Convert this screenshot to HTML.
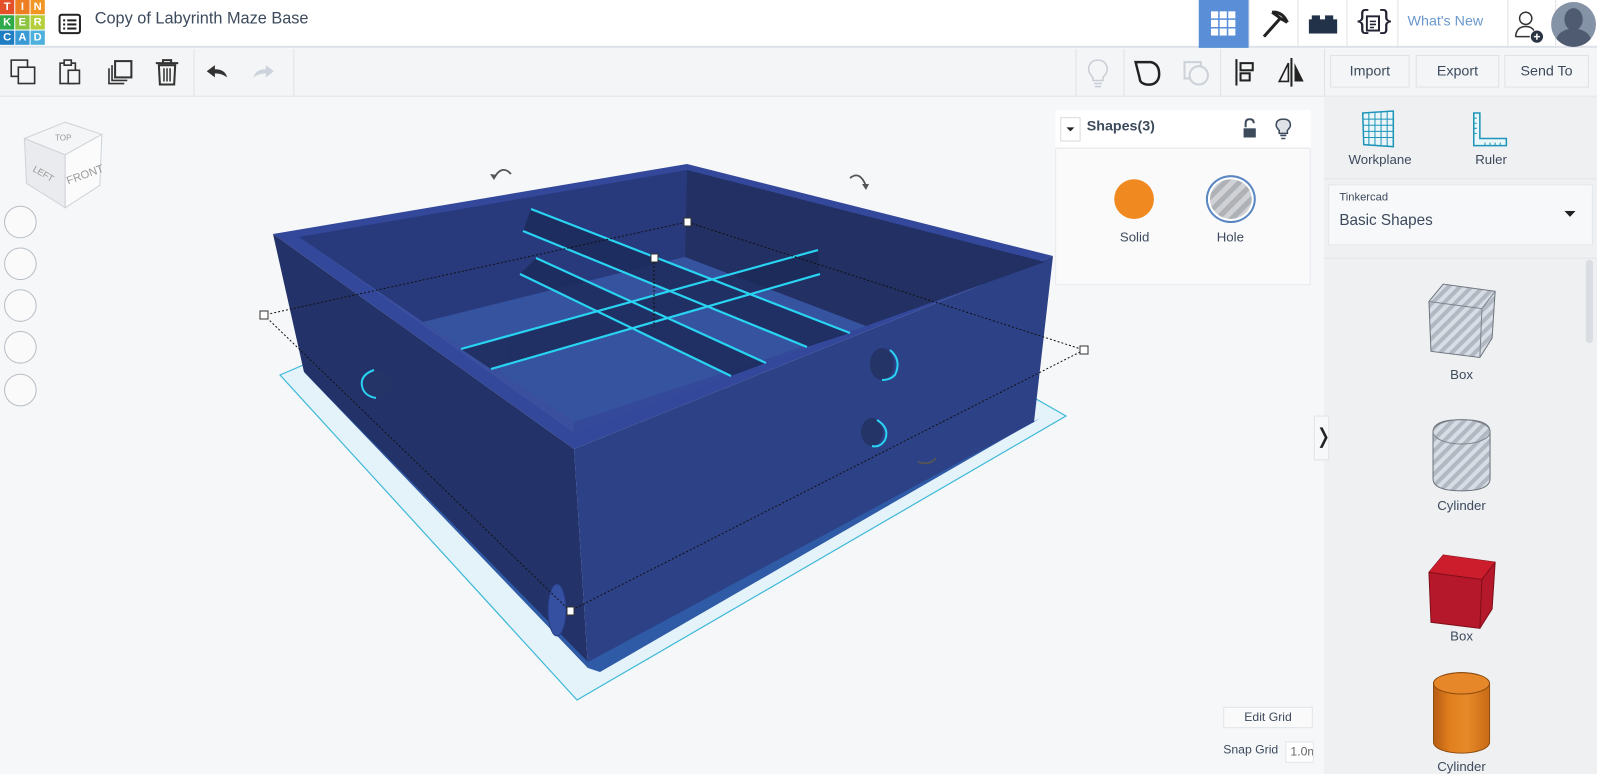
<!DOCTYPE html>
<html><head><meta charset="utf-8">
<style>
*{box-sizing:border-box;margin:0;padding:0}
html,body{width:1597px;height:774px;overflow:hidden;background:#f6f7f8;font-family:"Liberation Sans",sans-serif;color:#3c4a5c}
#w{position:absolute;left:0;top:0;width:1568px;height:760px;transform:scale(1.01849,1.01842);transform-origin:0 0;background:#f6f7f8}
.a{position:absolute}
.hdr{left:0;top:0;width:1568px;height:47px;background:#fff;border-bottom:2px solid #dde2ea}
.tb{left:0;top:48px;width:1568px;height:47px;background:#f4f5f6;border-bottom:1px solid #e2e5e8}
.vs{position:absolute;top:48px;width:1px;height:46px;background:#dfe2e6}
.btn{position:absolute;top:54px;height:32px;border:1px solid #dfe2e6;background:#f4f5f6;font-size:14px;color:#3c4a5c;text-align:center;line-height:28px}
.rp{left:1300px;top:95px;width:268px;height:665px;background:#eff0f2}
.lbl{position:absolute;font-size:13px;color:#3c4a5c;text-align:center}
.circ{position:absolute;left:4px;width:32px;height:32px;border:1px solid #b8bec6;border-radius:50%;background:#fafafa}
.logo div{position:absolute;width:14px;height:14px;color:#fff;font-size:11px;font-weight:bold;text-align:center;line-height:14px}
</style></head><body>
<div id="w">
<div class="a hdr"></div>
<div class="a tb"></div>
<div class="a logo" style="left:0;top:0;width:44px;height:44px">
<div style="left:0;top:0;background:#e4502a">T</div><div style="left:15px;top:0;background:#ee7e22">I</div><div style="left:30px;top:0;background:#f29523">N</div>
<div style="left:0;top:15px;background:#2eaa4a">K</div><div style="left:15px;top:15px;background:#8cc43f">E</div><div style="left:30px;top:15px;background:#b5cf3a">R</div>
<div style="left:0;top:30px;background:#1f7dc4">C</div><div style="left:15px;top:30px;background:#3a9ad6">A</div><div style="left:30px;top:30px;background:#4db0dd">D</div>
</div>
<svg class="a" style="left:57px;top:13px" width="24" height="22" viewBox="0 0 24 22"><rect x="1.5" y="1.5" width="20" height="18" rx="2" fill="none" stroke="#222" stroke-width="2"/><g fill="#222"><rect x="5" y="6" width="2" height="2"/><rect x="9" y="6" width="9" height="2"/><rect x="5" y="10" width="2" height="2"/><rect x="9" y="10" width="9" height="2"/><rect x="5" y="14" width="2" height="2"/><rect x="9" y="14" width="9" height="2"/></g></svg>
<div class="a" style="left:93px;top:10px;font-size:16px;color:#3c4a5c">Copy of Labyrinth Maze Base</div>
<div class="a" style="left:1177px;top:0;width:49px;height:47px;background:#5a8fd8"></div>
<svg class="a" style="left:1189px;top:11px" width="24" height="24"><g fill="#fff"><rect x="0" y="0" width="7" height="7"/><rect x="8.5" y="0" width="7" height="7"/><rect x="17" y="0" width="7" height="7"/><rect x="0" y="8.5" width="7" height="7"/><rect x="8.5" y="8.5" width="7" height="7"/><rect x="17" y="8.5" width="7" height="7"/><rect x="0" y="17" width="7" height="7"/><rect x="8.5" y="17" width="7" height="7"/><rect x="17" y="17" width="7" height="7"/></g></svg>
<div class="vs" style="top:0;left:1226px;height:47px"></div><div class="vs" style="top:0;left:1274px;height:47px"></div><div class="vs" style="top:0;left:1322px;height:47px"></div><div class="vs" style="top:0;left:1372px;height:47px"></div><div class="vs" style="top:0;left:1480px;height:47px"></div><div class="vs" style="top:0;left:1527px;height:47px"></div>
<svg class="a" style="left:1235px;top:8px" width="32" height="30"><path d="M6 28 L22 10 M14 4 Q24 3 29 14 M14 4 Q20 8 22 10 M22 10 Q26 12 29 14" stroke="#222" stroke-width="3" fill="none"/></svg>
<svg class="a" style="left:1285px;top:15px" width="28" height="18"><rect x="0" y="4" width="28" height="14" fill="#223249"/><rect x="3" y="0" width="8" height="5" fill="#223249"/><rect x="16" y="0" width="8" height="5" fill="#223249"/></svg>
<div class="a" style="left:1330px;top:6px;font-size:26px;color:#223;font-family:'Liberation Mono',monospace">{</div><div class="a" style="left:1353px;top:6px;font-size:26px;color:#223;font-family:'Liberation Mono',monospace">}</div>
<svg class="a" style="left:1341px;top:15px" width="14" height="16"><rect x="1" y="1" width="12" height="14" fill="none" stroke="#223" stroke-width="2"/><path d="M4 6h6M4 9h6M4 12h4" stroke="#223" stroke-width="1.5"/></svg>
<div class="a" style="left:1382px;top:12px;font-size:14px;color:#6a98cc">What's New</div>
<svg class="a" style="left:1486px;top:9px" width="32" height="34"><circle cx="12" cy="9" r="6" fill="none" stroke="#333" stroke-width="1.5"/><path d="M2 27 Q3 17 12 17 Q18 17 20 21 M2 27 H16" fill="none" stroke="#333" stroke-width="1.5"/><circle cx="23" cy="27" r="6" fill="#2a3344"/><path d="M23 24v6M20 27h6" stroke="#fff" stroke-width="1.5"/></svg>
<div class="a" style="left:1523px;top:2px;width:44px;height:44px;border-radius:50%;background:#8593a6;overflow:hidden"><div class="a" style="left:13px;top:6px;width:18px;height:22px;border-radius:50%;background:#4e5b70"></div><div class="a" style="left:5px;top:26px;width:34px;height:24px;border-radius:50% 50% 0 0;background:#4e5b70"></div></div>
<svg class="a" style="left:10px;top:58px" width="26" height="26"><rect x="1" y="1" width="16" height="16" fill="none" stroke="#333" stroke-width="1.6"/><rect x="8" y="8" width="16" height="16" fill="#f4f5f6" stroke="#333" stroke-width="1.6"/></svg>
<svg class="a" style="left:57px;top:57px" width="24" height="28"><rect x="2" y="5" width="15" height="20" fill="none" stroke="#333" stroke-width="1.6"/><rect x="6" y="2" width="7" height="5" fill="#f4f5f6" stroke="#333" stroke-width="1.6"/><rect x="10" y="12" width="11" height="13" fill="#f4f5f6" stroke="#333" stroke-width="1.6"/></svg>
<svg class="a" style="left:104px;top:58px" width="28" height="28"><rect x="9" y="2" width="16" height="16" fill="none" stroke="#333" stroke-width="2"/><path d="M6 6v15h15M3 9v15h15" fill="none" stroke="#333" stroke-width="1.6"/></svg>
<svg class="a" style="left:152px;top:57px" width="24" height="28"><path d="M1 5h22M8 5V2h8v3" fill="none" stroke="#333" stroke-width="2"/><path d="M4 7h16l-1 19H5z" fill="none" stroke="#333" stroke-width="2"/><path d="M9 10v13M12 10v13M15 10v13" stroke="#333" stroke-width="1.5"/></svg>
<div class="vs" style="left:190px"></div><div class="vs" style="left:288px"></div>
<svg class="a" style="left:201px;top:62px" width="24" height="18"><path d="M2 8 L10 2 V6 Q20 6 22 14 Q17 10 10 10 V14 Z" fill="#333"/></svg>
<svg class="a" style="left:247px;top:62px" width="24" height="18"><path d="M22 8 L14 2 V6 Q4 6 2 14 Q7 10 14 10 V14 Z" fill="#ccd3dc"/></svg>
<div class="vs" style="left:1056px"></div><div class="vs" style="left:1103px"></div><div class="vs" style="left:1198px"></div><div class="vs" style="left:1300px"></div>
<svg class="a" style="left:1068px;top:58px" width="20" height="28"><path d="M5 18 Q0 13 1 8 Q3 1 10 1 Q17 1 19 8 Q20 13 15 18 V21 H5Z" fill="none" stroke="#c9ced6" stroke-width="1.5"/><path d="M6 24h8M7 27h6" stroke="#c9ced6" stroke-width="1.5"/></svg>
<svg class="a" style="left:1113px;top:59px" width="28" height="26"><path d="M2 2 H17 Q26 4 25 16 Q23 25 13 24 Q6 23 6 18 L2 2Z" fill="none" stroke="#222" stroke-width="2.4"/></svg>
<svg class="a" style="left:1161px;top:59px" width="28" height="26"><rect x="2" y="2" width="16" height="16" fill="none" stroke="#cdd2d9" stroke-width="2"/><circle cx="16" cy="15" r="9" fill="#f4f5f6" stroke="#cdd2d9" stroke-width="2"/></svg>
<svg class="a" style="left:1212px;top:57px" width="22" height="28"><path d="M2 1v26" stroke="#222" stroke-width="2"/><rect x="6" y="5" width="12" height="7" fill="none" stroke="#222" stroke-width="2"/><rect x="6" y="15" width="9" height="7" fill="none" stroke="#222" stroke-width="2"/></svg>
<svg class="a" style="left:1253px;top:56px" width="30" height="30"><path d="M15 1v28" stroke="#222" stroke-width="2"/><path d="M12 6 L3 24 H12Z" fill="none" stroke="#222" stroke-width="1.6"/><path d="M18 6 L27 24 H18Z" fill="#222"/></svg>
<div class="btn" style="left:1306px;width:78px">Import</div>
<div class="btn" style="left:1390px;width:82px">Export</div>
<div class="btn" style="left:1477px;width:83px">Send To</div>
<div class="a rp"></div>
<svg class="a" style="left:1335px;top:108px" width="36" height="38"><path d="M3 3 L33 1 L33 36 L4 34Z" fill="#eaf6fa" stroke="#1e94b8" stroke-width="1.5"/><g stroke="#1e94b8" stroke-width="1"><path d="M9 3v32M15 2.5v32.5M21 2v33M27 1.5v34M3.5 9h29.5M3.7 15h29.3M3.8 21h29.2M3.9 27h29.1"/></g></svg>
<div class="lbl" style="left:1315px;top:149px;width:80px">Workplane</div>
<svg class="a" style="left:1445px;top:110px" width="36" height="36"><path d="M2 1 H8 V26 H34 V33 H2Z" fill="#eaf6fa" stroke="#1e94b8" stroke-width="1.5"/><path d="M2 6h3M2 11h3M2 16h3M2 21h3M13 33v-3M18 33v-3M23 33v-3M28 33v-3" stroke="#1e94b8" stroke-width="1"/></svg>
<div class="lbl" style="left:1424px;top:149px;width:80px">Ruler</div>
<div class="a" style="left:1300px;top:175px;width:268px;height:1px;background:#e2e5e8"></div>
<div class="a" style="left:1304px;top:181px;width:260px;height:60px;background:#f7f8f9;border:1px solid #e3e6e9"></div>
<div class="a" style="left:1315px;top:188px;font-size:11px">Tinkercad</div>
<div class="a" style="left:1315px;top:208px;font-size:15px">Basic Shapes</div>
<svg class="a" style="left:1536px;top:207px" width="12" height="8"><path d="M0 0h11l-5.5 6z" fill="#222"/></svg>
<div class="a" style="left:1300px;top:253px;width:268px;height:1px;background:#e2e5e8"></div>
<div class="a" style="left:1557px;top:255px;width:7px;height:82px;border-radius:4px;background:#dadde1"></div>
<svg class="a" style="left:1395px;top:272px" width="80" height="360">
<defs><pattern id="st" width="8" height="8" patternUnits="userSpaceOnUse" patternTransform="rotate(45)"><rect width="8" height="8" fill="#d7dde5"/><rect width="4" height="8" fill="#b1b8c2"/></pattern></defs>
<path d="M8 24 L22 7 L73 14 L70 60 L58 79 L10 73Z" fill="url(#st)" stroke="#6e747c" stroke-width="1"/><path d="M8 24 L60 31 L73 14 M60 31 L58 79" fill="none" stroke="#7d838b" stroke-width="1"/>
<path d="M12 152 Q12 140 40 140 Q68 140 68 152 V198 Q68 210 40 210 Q12 210 12 198Z" fill="url(#st)" stroke="#6e747c"/><ellipse cx="40" cy="152" rx="28" ry="12" fill="none" stroke="#7d838b"/>
<path d="M8 290 L22 273 L73 280 L70 326 L58 345 L10 339Z" fill="#b5182a" stroke="#7e0e18"/><path d="M8 290 L22 273 L73 280 L60 297Z" fill="#cc1d2d"/><path d="M8 290 L60 297 L73 280 M60 297 L58 345" fill="none" stroke="#7e0e18"/>
</svg>
<div class="a" style="left:1407px;top:660px;width:56px;height:80px;background:linear-gradient(90deg,#b85d12,#e2801f 30%,#e78a28 60%,#c96a16);border:1px solid #8a4a0e;border-radius:28px/11px"></div>
<div class="a" style="left:1407px;top:660px;width:56px;height:22px;border-radius:50%;background:#e6872a;border:1px solid #8a4a0e"></div>
<div class="lbl" style="left:1395px;top:360px;width:80px">Box</div>
<div class="lbl" style="left:1395px;top:489px;width:80px">Cylinder</div>
<div class="lbl" style="left:1395px;top:617px;width:80px">Box</div>
<div class="lbl" style="left:1395px;top:745px;width:80px">Cylinder</div>
<svg class="a" style="left:0;top:0" width="1568" height="760" viewBox="0 0 1597 774">
<path d="M280 375 L687 200 L1066 416 L577 700Z" fill="#e3f3f9" stroke="#3db8d8" stroke-width="1.2"/>
<path d="M273 234 L687 164 L1053 256 L574 449Z" fill="#33489a"/>
<path d="M273 234 L574 449 L588 668 L304 372Z" fill="#24326a"/>
<path d="M574 449 L1053 256 L1034 422 L588 668Z" fill="#2d4187"/>
<path d="M304 372 L588 668 L600 672 L1040 418 L1034 422 L588 662Z" fill="#2e5aa6"/>
<path d="M299 237 L687 170 L1045 262 L574 433Z" fill="#34499a"/>
<path d="M299 237 L687 170 L685 257 L423 322Z" fill="#283a7c"/>
<path d="M687 170 L1045 262 L866 326 L685 257Z" fill="#223063"/>
<path d="M685 257 L866 326 L574 422 L423 322Z" fill="#36539f"/>
<path d="M299 237 L423 322 L574 422 L574 433Z" fill="#3a4f9e"/>
<g fill="#1d2b5a" opacity=".85"><path d="M531 209 L850 333 L807 347 L523 231Z"/><path d="M536 258 L766 363 L731 376 L520 274Z"/><path d="M818 250 L461 349 L491 369 L820 274Z"/></g>
<g stroke="#29d3f2" stroke-width="2.2"><path d="M531 209 L850 333M523 231 L807 347M536 258 L766 363M520 274 L731 376M818 250 L461 349M820 274 L491 369"/></g>
<g fill="#243466"><ellipse cx="378" cy="384" rx="14" ry="14"/><ellipse cx="882" cy="364" rx="12" ry="16"/><ellipse cx="872" cy="432" rx="11" ry="14"/></g>
<g fill="none" stroke="#29d3f2" stroke-width="2"><path d="M374 370 Q360 375 362 386 Q364 396 376 398"/><path d="M890 350 Q902 360 895 375 Q890 380 882 380"/><path d="M877 420 Q890 428 885 440 Q880 448 872 446"/></g>
<ellipse cx="557" cy="610" rx="9" ry="26" fill="#3550a0" stroke="#263a80"/>
<g fill="none" stroke="#111" stroke-width="1" stroke-dasharray="2,2"><path d="M264 315 L570 611 L1084 350 L687 222 L509 261 L264 315"/><path d="M654 258 V327"/></g>
<g fill="#fff" stroke="#333"><rect x="260" y="311" width="8" height="8"/><rect x="1080" y="346" width="8" height="8"/><rect x="567" y="607" width="7" height="8"/><rect x="684" y="218" width="7" height="8"/><rect x="651" y="254" width="7" height="8"/></g>
<g fill="none" stroke="#555" stroke-width="1.8"><path d="M494 178 Q502 164 511 174"/><path d="M850 178 Q860 170 866 186"/><path d="M918 462 Q930 466 936 458"/></g>
<g fill="#555"><path d="M490 174 l4 6 l3 -5z"/><path d="M862 184 l4 6 l3 -6z"/></g>
</svg>
<svg class="a" style="left:20px;top:118px" width="84" height="90"><path d="M4 18 L44 2 L80 14 L44 34Z" fill="#f4f5f6" stroke="#cfd3d8"/><path d="M4 18 L44 34 L44 86 L6 62Z" fill="#e9ebee" stroke="#cfd3d8"/><path d="M44 34 L80 14 L78 64 L44 86Z" fill="#fbfbfc" stroke="#cfd3d8"/><text x="34" y="20" font-size="8" fill="#999" font-family="Liberation Sans">TOP</text><text x="12" y="52" font-size="9" fill="#999" font-family="Liberation Sans" transform="rotate(30 16 50)">LEFT</text><text x="46" y="62" font-size="11" fill="#999" font-family="Liberation Sans" transform="rotate(-20 50 60)">FRONT</text></svg>
<div class="circ" style="top:202px"></div><div class="circ" style="top:243px"></div><div class="circ" style="top:284px"></div><div class="circ" style="top:325px"></div><div class="circ" style="top:367px"></div>
<div class="a" style="left:1036px;top:108px;width:251px;height:172px;background:#fafafb;border:1px solid #e7e9ec"></div>
<div class="a" style="left:1036px;top:108px;width:251px;height:38px;background:#fff;border-bottom:1px solid #e3e6e9"></div>
<div class="a" style="left:1041px;top:115px;width:20px;height:24px;border:1px solid #d8dbe0;background:#fff"></div>
<svg class="a" style="left:1047px;top:125px" width="9" height="6"><path d="M0 0h8l-4 4z" fill="#222"/></svg>
<div class="a" style="left:1067px;top:115px;font-size:14px;font-weight:bold;color:#3c4a5c">Shapes(3)</div>
<svg class="a" style="left:1219px;top:116px" width="16" height="20"><path d="M4 9 V5 Q4 1 8 1 Q12 1 12 5" fill="none" stroke="#3c4a5c" stroke-width="2"/><rect x="2" y="10" width="12" height="9" fill="#3c4a5c"/></svg>
<svg class="a" style="left:1252px;top:116px" width="16" height="22"><path d="M4 12 Q1 9 1 7 Q1 1 8 1 Q15 1 15 7 Q15 9 12 12 V15 H4Z" fill="#dfe3e8" stroke="#3c4a5c" stroke-width="1.5"/><path d="M5 17h6M6 20h4" stroke="#3c4a5c" stroke-width="1.5"/></svg>
<div class="a" style="left:1094px;top:176px;width:39px;height:39px;border-radius:50%;background:#f08a20"></div>
<div class="a" style="left:1184px;top:172px;width:49px;height:47px;border-radius:50%;border:2px solid #5a86c2;background:#fff"></div>
<div class="a" style="left:1188px;top:176px;width:41px;height:39px;border-radius:50%;background:repeating-linear-gradient(135deg,#aeb1b5 0 5px,#cfd1d4 5px 10px)"></div>
<div class="lbl" style="left:1084px;top:225px;width:60px">Solid</div>
<div class="lbl" style="left:1178px;top:225px;width:60px">Hole</div>
<div class="a" style="left:1290px;top:408px;width:15px;height:44px;background:#f7f8f9;border:1px solid #e1e4e8;font-size:20px;line-height:40px;text-align:center;color:#222">&#x276D;</div>
<div class="a" style="left:1201px;top:694px;width:88px;height:21px;border:1px solid #e1e4e8;background:#fafafa;font-size:12px;text-align:center;line-height:19px">Edit Grid</div>
<div class="a" style="left:1201px;top:729px;font-size:12px">Snap Grid</div>
<div class="a" style="left:1262px;top:728px;width:28px;height:21px;border:1px solid #e1e4e8;background:#fff;font-size:12px;line-height:19px;padding-left:4px;overflow:hidden;white-space:nowrap;color:#666">1.0mm</div>
</div>
</body></html>
